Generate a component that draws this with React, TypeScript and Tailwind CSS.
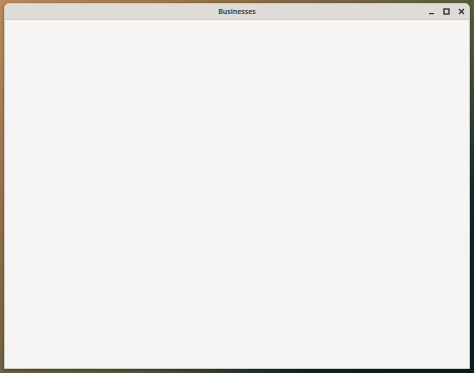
export default function App() {
  return (
    <div className="h-[373px] w-[474px] overflow-hidden bg-[linear-gradient(135deg,#b98a5a_0%,#8c6a44_30%,#4d5a3a_60%,#12232a_80%,#0c1c22_100%)] pl-[4px] pt-[3px] font-['Noto_Sans','DejaVu_Sans',sans-serif]">
      <div className="flex h-[366px] w-[466px] flex-col overflow-hidden rounded-t-[5px] border border-[#cfcbc6] bg-[#f6f5f4] shadow-[0_1px_3px_rgba(0,0,0,0.4)]">
        <div className="relative flex h-[16px] shrink-0 items-center justify-center border-b border-[#d0ccc7] bg-[#dfdcd8]">
          <span className="text-[7px] font-semibold leading-none text-[#2e3436]">
            Businesses
          </span>
          <div className="absolute right-[4px] top-0 flex h-full items-center gap-[8px] text-[#2e3436]">
            <svg width="7" height="7" viewBox="0 0 7 7">
              <rect x="1" y="5" width="5" height="1.2" fill="currentColor" />
            </svg>
            <svg width="7" height="7" viewBox="0 0 7 7">
              <rect x="1" y="1" width="5" height="5" fill="none" stroke="currentColor" strokeWidth="1.4" />
            </svg>
            <svg width="7" height="7" viewBox="0 0 7 7">
              <path d="M1 1L6 6M6 1L1 6" stroke="currentColor" strokeWidth="1.3" />
            </svg>
          </div>
        </div>
        <div className="flex-1 bg-[#f6f5f4]" />
      </div>
    </div>
  );
}
